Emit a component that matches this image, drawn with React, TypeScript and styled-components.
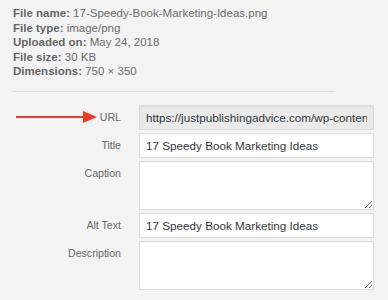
import React from "react";
import styled, { createGlobalStyle } from "styled-components";

const GlobalStyle = createGlobalStyle`
  html, body {
    margin: 0;
    padding: 0;
    background: #f3f3f3;
    font-family: "Liberation Sans", Arial, sans-serif;
  }
`;

type Field = {
  label: string;
  value: string;
  multiline?: boolean;
  readOnly?: boolean;
  arrow?: boolean;
};

const info: [string, string][] = [
  ["File name:", "17-Speedy-Book-Marketing-Ideas.png"],
  ["File type:", "image/png"],
  ["Uploaded on:", "May 24, 2018"],
  ["File size:", "30 KB"],
  ["Dimensions:", "750 × 350"],
];

const fields: Field[] = [
  {
    label: "URL",
    value: "https://justpublishingadvice.com/wp-content/uploads/2018/05/17-Speedy-Book-Marketing-Ideas.png",
    readOnly: true,
    arrow: true,
  },
  { label: "Title", value: "17 Speedy Book Marketing Ideas" },
  { label: "Caption", value: "", multiline: true },
  { label: "Alt Text", value: "17 Speedy Book Marketing Ideas" },
  { label: "Description", value: "", multiline: true },
];

const Arrow = () => (
  <svg width="81" height="12" viewBox="0 0 81 12">
    <line x1="0" y1="6" x2="70" y2="6" stroke="#ee3a22" strokeWidth="2.2" />
    <polygon points="67,0 81,6 67,12" fill="#ee3a22" />
  </svg>
);

const App: React.FC = () => {
  return (
    <Page>
      <GlobalStyle />
      <Details>
        {info.map(([k, v]) => (
          <InfoLine key={k}>
            <strong>{k}</strong> {v}
          </InfoLine>
        ))}
      </Details>
      <Settings>
        {fields.map((f) => (
          <Row key={f.label}>
            <Label>
              {f.arrow && <Arrow />}
              <span>{f.label}</span>
            </Label>
            {f.multiline ? (
              <TextArea defaultValue={f.value} />
            ) : (
              <TextInput defaultValue={f.value} readOnly={f.readOnly} $readOnly={f.readOnly} />
            )}
          </Row>
        ))}
      </Settings>
    </Page>
  );
};

const Page = styled.div`
  width: 388px;
  height: 300px;
  background: #f3f3f3;
  overflow: hidden;
`;

const Details = styled.section`
  width: 322px;
  margin-left: 12px;
  padding: 6px 0 12px 1px;
  border-bottom: 1px solid #dddddd;
`;

const InfoLine = styled.div`
  font-size: 11.5px;
  line-height: 14.6px;
  color: #6b6b6b;
  white-space: nowrap;

  strong {
    font-weight: 600;
    color: #666666;
  }
`;

const Settings = styled.section`
  display: flex;
  flex-direction: column;
  gap: 3px;
  margin-top: 13px;
`;

const Row = styled.div`
  display: flex;
  align-items: flex-start;
  gap: 18px;
`;

const Label = styled.label`
  width: 121px;
  display: flex;
  justify-content: flex-end;
  align-items: center;
  gap: 3px;
  padding-top: 5px;
  font-size: 10.6px;
  line-height: 14px;
  color: #666666;
  flex-shrink: 0;
`;

const TextInput = styled.input<{ $readOnly?: boolean }>`
  box-sizing: border-box;
  width: 235px;
  height: 25px;
  margin: 0;
  padding: 0 6px;
  border: 1px solid #dddddd;
  border-radius: 0;
  box-shadow: inset 0 1px 2px rgba(0, 0, 0, 0.05);
  background: ${(p) => (p.$readOnly ? "#eaeaea" : "#ffffff")};
  color: #32373c;
  font-family: "Liberation Sans", Arial, sans-serif;
  font-size: 11.7px;
  outline: none;
`;

const TextArea = styled.textarea`
  box-sizing: border-box;
  width: 235px;
  height: 49px;
  margin: 0;
  padding: 4px 6px;
  border: 1px solid #dddddd;
  border-radius: 0;
  box-shadow: inset 0 1px 2px rgba(0, 0, 0, 0.05);
  background: #ffffff;
  color: #32373c;
  font-family: "Liberation Sans", Arial, sans-serif;
  font-size: 11.7px;
  display: block;
  outline: none;
`;

export default App;
